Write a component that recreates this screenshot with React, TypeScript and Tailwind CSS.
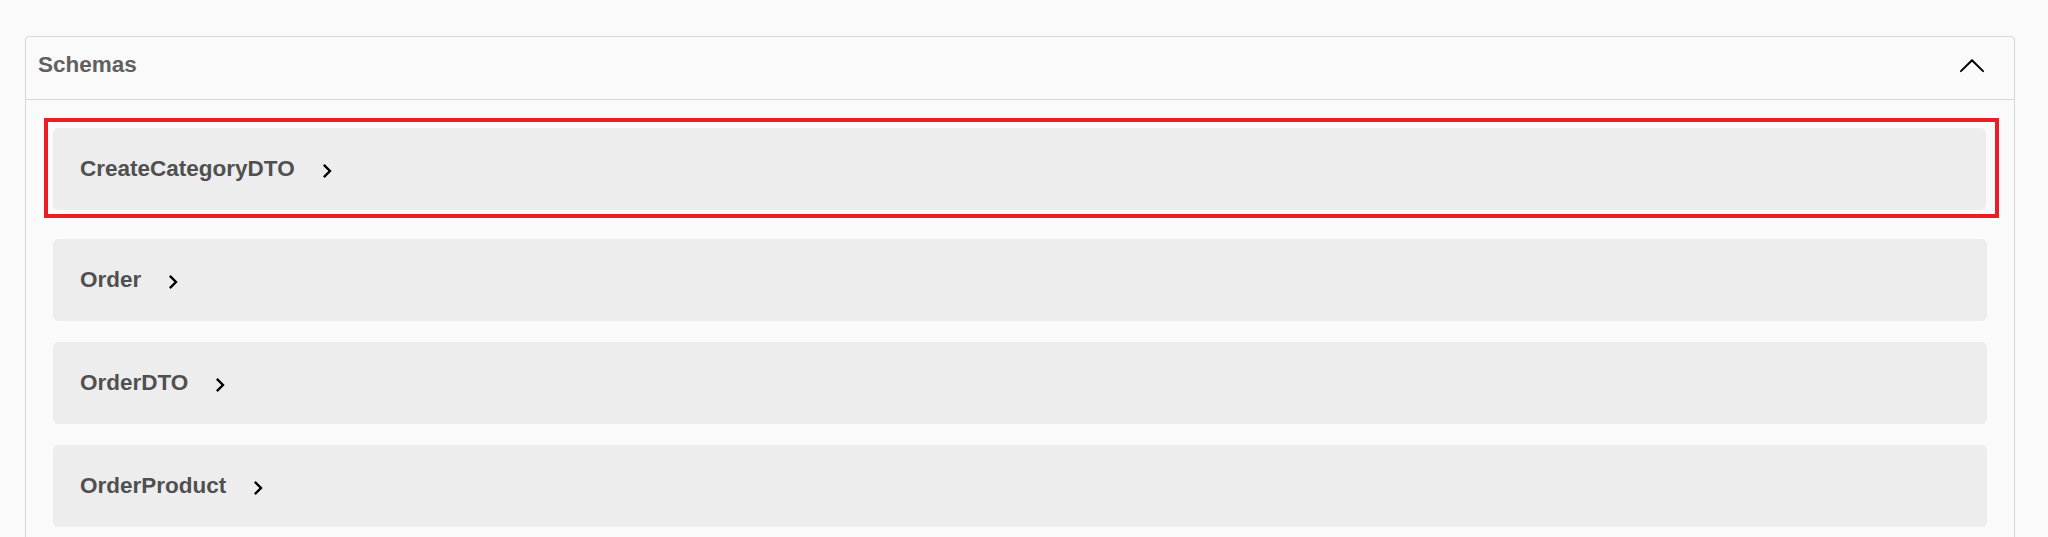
import React from 'react';

const schemas = ['CreateCategoryDTO', 'Order', 'OrderDTO', 'OrderProduct'];

function ArrowRight() {
  return (
    <svg viewBox="0 0 24 24" className="w-[28px] h-[28px] ml-[18px] mt-[4px] shrink-0" fill="#000">
      <path d="M10 6L8.59 7.41 13.17 12l-4.58 4.59L10 18l6-6z" />
    </svg>
  );
}

function ArrowUp() {
  return (
    <svg viewBox="0 0 20 20" className="w-[28px] h-[28px]" fill="#000">
      <path d="M17.418 14.908c.272.268.709.268.979 0 .27-.268.271-.701 0-.969L10.489 6.109c-.27-.268-.707-.268-.979 0L1.602 13.939c-.27.268-.27.701 0 .969.271.268.709.268.979 0L10 7.767l7.418 7.141z" />
    </svg>
  );
}

function ModelRow({ name }: { name: string }) {
  return (
    <div className="h-[82px] rounded-[5px] bg-[#ededed] flex items-center pl-[27px]">
      <span className="text-[22.5px] leading-[28px] font-bold text-[#505050]">{name}</span>
      <ArrowRight />
    </div>
  );
}

export default function App() {
  return (
    <div className="w-[2048px] h-[537px] overflow-hidden bg-[#fafafa] pt-[36px] pl-[25px] pr-[33px] font-['Liberation_Sans',Arial,sans-serif]">
      <section className="border border-[#d6d6d6] rounded-[4px]">
        <div className="h-[63px] border-b border-[#d6d6d6] flex items-center justify-between pl-[12px] pr-[28px] pb-[7px]">
          <h4 className="text-[22.5px] leading-[28px] font-bold text-[#606060]">Schemas</h4>
          <ArrowUp />
        </div>
        <div className="pt-[18px] pb-[40px]">
          {schemas.map((name, i) =>
            i === 0 ? (
              <div key={name} className="ml-[18px] mr-[15px] mb-[21px] border-4 border-[#ed1c24] pl-[5px] pr-[9px] pt-[6px] pb-[4px]">
                <ModelRow name={name} />
              </div>
            ) : (
              <div key={name} className="mx-[27px] mb-[21px]">
                <ModelRow name={name} />
              </div>
            )
          )}
        </div>
      </section>
    </div>
  );
}
